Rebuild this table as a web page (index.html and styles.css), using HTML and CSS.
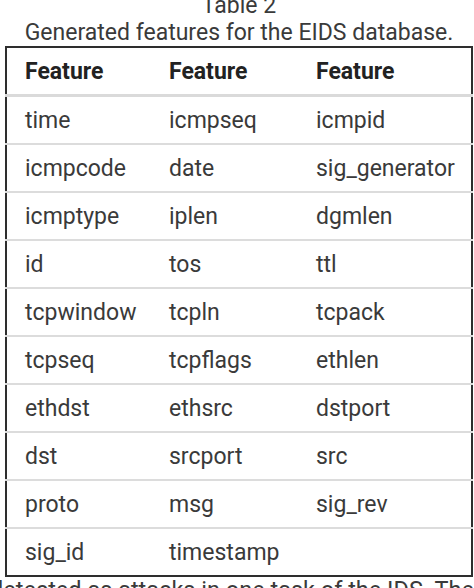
FILE: index.html
```html
<!DOCTYPE html>
<html>
<head>
<meta charset="utf-8">
<link rel="stylesheet" href="styles.css">
</head>
<body>
<div class="page">
  <div class="caption">
    <div class="caption-line">Table 2</div>
    <div class="caption-line">Generated features for the EIDS database.</div>
  </div>
  <table class="features">
    <colgroup>
      <col class="c1"><col class="c2"><col class="c3">
    </colgroup>
    <thead>
      <tr><th>Feature</th><th>Feature</th><th>Feature</th></tr>
    </thead>
    <tbody>
      <tr><td>time</td><td>icmpseq</td><td>icmpid</td></tr>
      <tr><td>icmpcode</td><td>date</td><td>sig_generator</td></tr>
      <tr><td>icmptype</td><td>iplen</td><td>dgmlen</td></tr>
      <tr><td>id</td><td>tos</td><td>ttl</td></tr>
      <tr><td>tcpwindow</td><td>tcpln</td><td>tcpack</td></tr>
      <tr><td>tcpseq</td><td>tcpflags</td><td>ethlen</td></tr>
      <tr><td>ethdst</td><td>ethsrc</td><td>dstport</td></tr>
      <tr><td>dst</td><td>srcport</td><td>src</td></tr>
      <tr><td>proto</td><td>msg</td><td>sig_rev</td></tr>
      <tr><td>sig_id</td><td>timestamp</td><td></td></tr>
    </tbody>
  </table>
  <p class="after">detected as attacks in one task of the IDS. The</p>
</div>
</body>
</html>
```
FILE: styles.css
```css
html, body {
  margin: 0;
  padding: 0;
  background: #ffffff;
  overflow: hidden;
}
body {
  font-family: Roboto, "Liberation Sans", sans-serif;
  font-size: 23px;
  color: #3a3a3a;
  width: 474px;
  height: 588px;
}
.page {
  padding-left: 5px;
  width: 468px;
}
.caption {
  margin-top: -8px;
  text-align: center;
  line-height: 27px;
}
.features {
  width: 468px;
  border-collapse: collapse;
  border: 2px solid #2e2e2e;
  table-layout: fixed;
}
.c1 { width: 145px; }
.c2 { width: 147px; }
.features th {
  text-align: left;
  font-weight: 700;
  color: #222;
  height: 46px;
  padding: 0 0 0 18px;
  border-bottom: 3px solid #dadada;
  vertical-align: middle;
}
.features td {
  height: 46px;
  padding: 0 0 0 18px;
  border-bottom: 2px solid #dcdcdc;
  vertical-align: middle;
  white-space: nowrap;
}
.features tbody tr:last-child td {
  border-bottom: none;
}
.after {
  margin: 0 0 0 -15px;
  font-size: 23.5px;
  white-space: nowrap;
  line-height: 27px;
}
```
